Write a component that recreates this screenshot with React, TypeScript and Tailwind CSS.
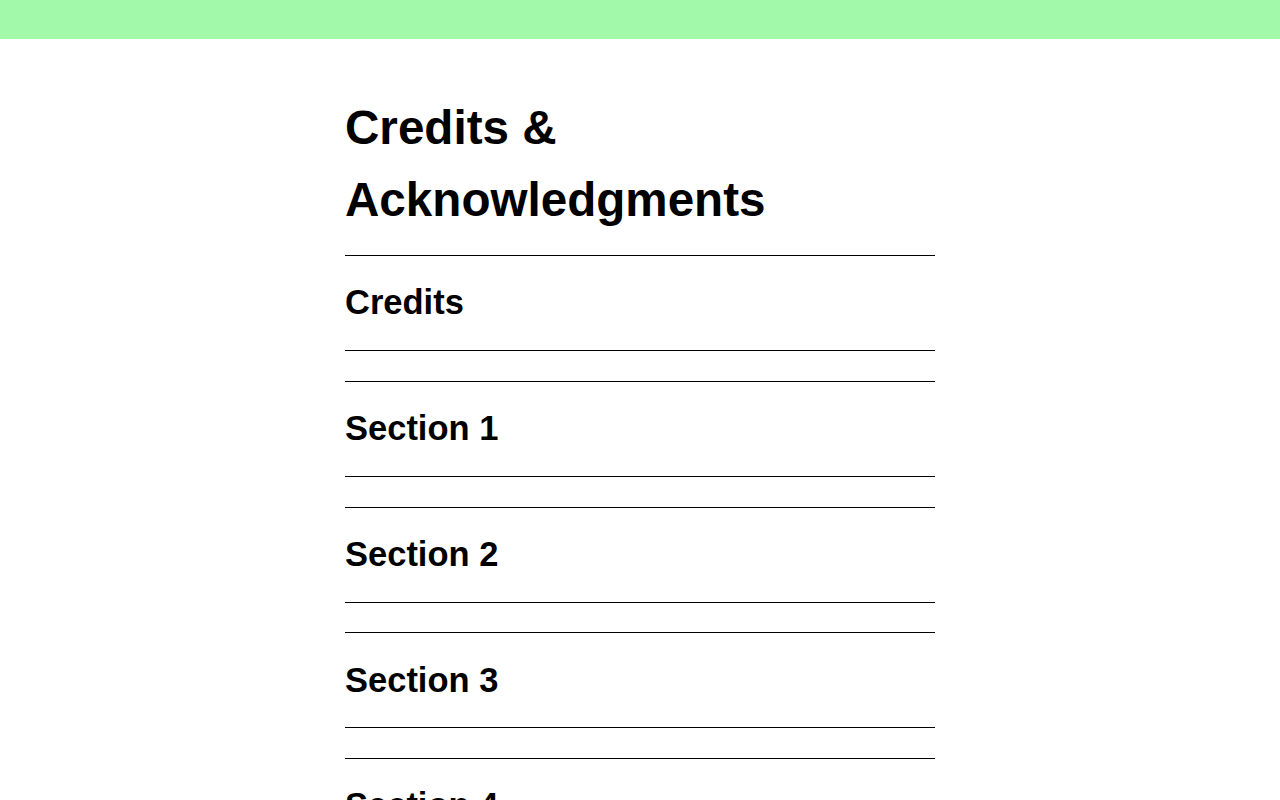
const sections = ["Credits", "Section 1", "Section 2", "Section 3", "Section 4"];

const App = () => {
  return (
    <div className="min-h-screen bg-white text-black font-['Liberation_Sans',Arial,sans-serif]">
      <header className="h-[39px] bg-[#a2f9a9]" />
      <main className="mx-auto w-[590px] pt-[53px]">
        <h1 className="text-[47.6px] font-bold leading-[72px] mb-[19px]">
          Credits &amp; Acknowledgments
        </h1>
        <div className="flex flex-col gap-[29.75px]">
          {sections.map((s) => (
            <section
              key={s}
              className="h-[96px] border-y border-black flex items-center"
            >
              <h2 className="text-[34.5px] font-bold leading-tight">{s}</h2>
            </section>
          ))}
        </div>
      </main>
    </div>
  );
};

export default App;
